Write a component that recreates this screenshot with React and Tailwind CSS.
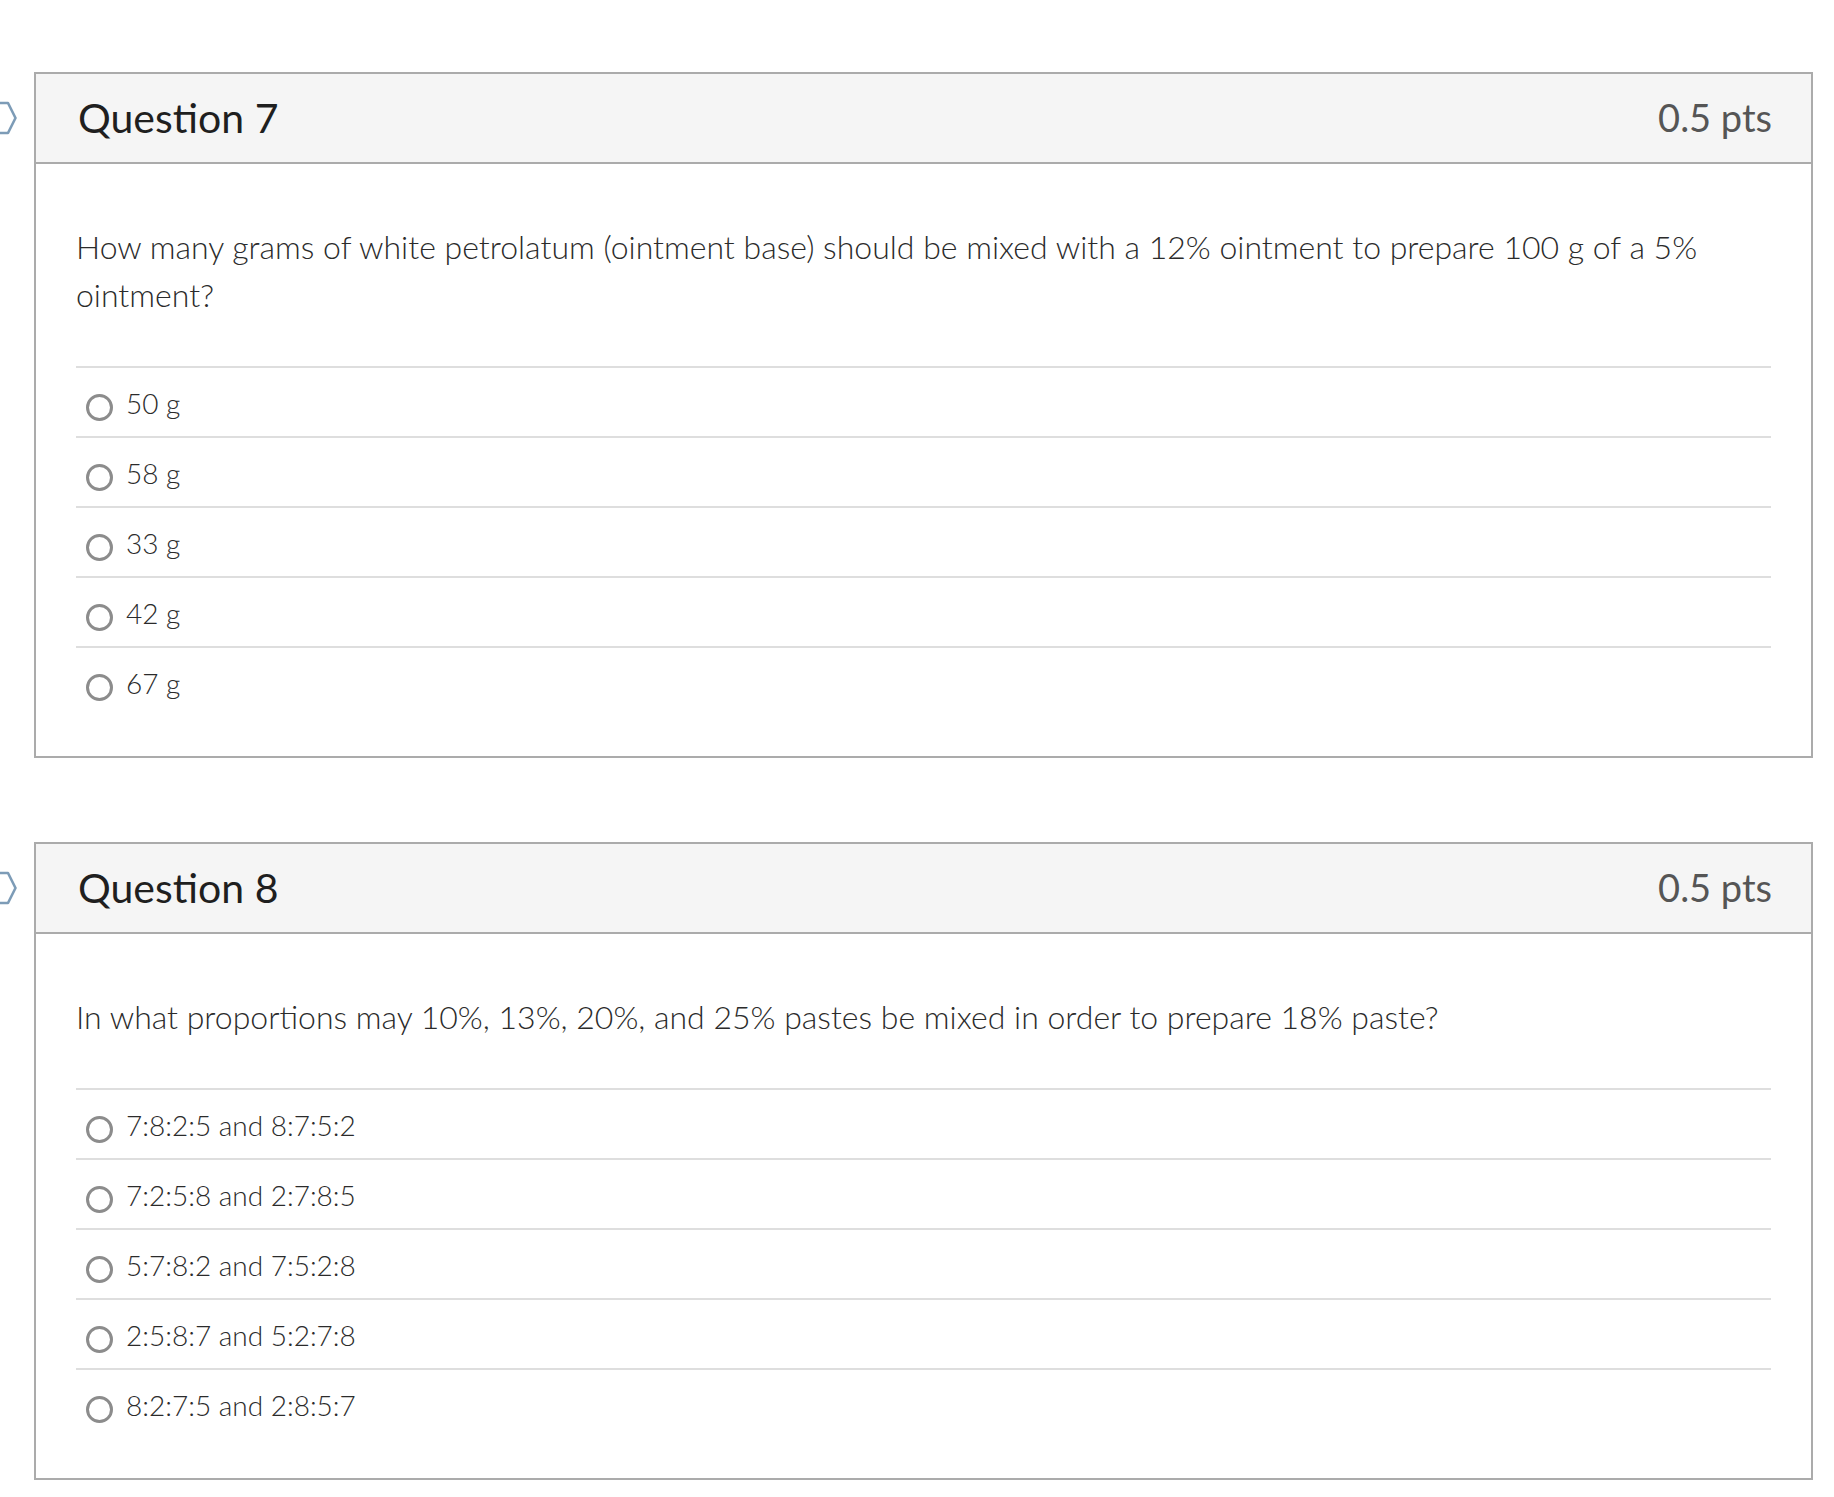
import React from "react";

const questions = [
  {
    title: "Question 7",
    pts: "0.5 pts",
    text: "How many grams of white petrolatum (ointment base) should be mixed with a 12% ointment to prepare 100 g of a 5% ointment?",
    answers: ["50 g", "58 g", "33 g", "42 g", "67 g"],
  },
  {
    title: "Question 8",
    pts: "0.5 pts",
    text: "In what proportions may 10%, 13%, 20%, and 25% pastes be mixed in order to prepare 18% paste?",
    answers: [
      "7:8:2:5 and 8:7:5:2",
      "7:2:5:8 and 2:7:8:5",
      "5:7:8:2 and 7:5:2:8",
      "2:5:8:7 and 5:2:7:8",
      "8:2:7:5 and 2:8:5:7",
    ],
  },
];

function Flag() {
  return (
    <svg width="18" height="36" viewBox="0 0 18 36" className="block">
      <path
        d="M-4 3 H8 L15.5 18 L8 33 H-4"
        fill="white"
        stroke="#7d9cb7"
        strokeWidth="2.6"
        strokeLinejoin="round"
      />
    </svg>
  );
}

function Question({ q, last }) {
  return (
    <div className={"flex " + (last ? "" : "mb-[84px]")}>
      <div className="w-[34px] shrink-0 pt-[28px]">
        <Flag />
      </div>
      <div className="w-[1779px] border-2 border-[#ababab] bg-white">
        <div className="h-[90px] flex items-center justify-between pl-[42px] pr-[39px] bg-[#f5f5f5] border-b-2 border-[#ababab]">
          <div className="text-[41px] text-[#1f1f1f] font-normal leading-none pb-[2px]">
            {q.title}
          </div>
          <div className="text-[38px] text-[#555555] font-normal leading-none pb-[2px]">
            {q.pts}
          </div>
        </div>
        <div className="px-[40px] pt-[59px] pb-[40px]">
          <div className="text-[32px] leading-[48px] text-[#2b2b2b] font-light mb-[47px]">
            {q.text}
          </div>
          <div>
            {q.answers.map((a, i) => (
              <div
                key={i}
                className="h-[70px] border-t-2 border-[#dedede] flex items-center pt-[10px] pl-[10px]"
              >
                <span className="w-[27px] h-[27px] rounded-full border-[3px] border-[#8c8c8c] bg-white shrink-0"></span>
                <span className="ml-[13px] text-[28px] leading-none text-[#2b2b2b] font-light pb-[8px]">
                  {a}
                </span>
              </div>
            ))}
          </div>
        </div>
      </div>
    </div>
  );
}

export default function App() {
  return (
    <div
      className="min-h-screen bg-white pt-[72px]"
      style={{ fontFamily: "Lato, 'Noto Sans', 'Liberation Sans', sans-serif" }}
    >
      {questions.map((q, i) => (
        <Question key={i} q={q} last={i === questions.length - 1} />
      ))}
    </div>
  );
}
